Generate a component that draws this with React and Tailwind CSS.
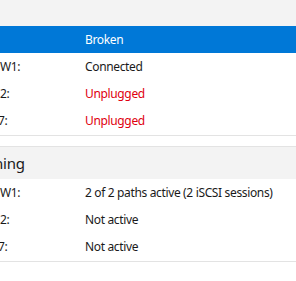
import React from "react";

const font = { fontFamily: '"Segoe UI", "Noto Sans", "Liberation Sans", sans-serif' };

function Row({ label, value, red, selected, shift = "" }) {
  return (
    <div
      className={`flex h-[27px] items-center text-[12px] tracking-[-0.35px] ${selected ? "bg-[#0078d7] text-white" : "text-[#1a1a1a]"}`}
    >
      <div className="w-[85px] shrink-0 overflow-hidden whitespace-nowrap">
        <span className={`inline-block ${shift}`}>{label}</span>
      </div>
      <div className={`whitespace-nowrap ${red ? "text-[#e0000f]" : ""}`}>{value}</div>
    </div>
  );
}

export default function App() {
  return (
    <div className="w-[296px] h-[281px] overflow-hidden bg-white" style={font}>
      <div className="h-[26px] bg-[#f3f3f3]" />
      <Row label="" value="Broken" selected />
      <Row label="W1:" value="Connected" />
      <Row label="2:" value="Unplugged" red />
      <Row label="7:" value="Unplugged" red shift="ml-[-2px]" />
      <div className="h-[11px] border-t border-[#e3e3e3] mt-[1px]" />
      <div className="border-t border-[#e3e3e3] bg-[#f3f3f3] h-[33px] flex items-center overflow-hidden">
        <span className="text-[15px] text-[#1a1a1a] ml-[-6px] whitespace-nowrap tracking-[-0.2px]">ning</span>
      </div>
      <Row label="W1:" value="2 of 2 paths active (2 iSCSI sessions)" />
      <Row label="2:" value="Not active" />
      <Row label="7:" value="Not active" shift="ml-[-2px]" />
      <div className="border-t border-[#e3e3e3] mt-[1px]" />
    </div>
  );
}
